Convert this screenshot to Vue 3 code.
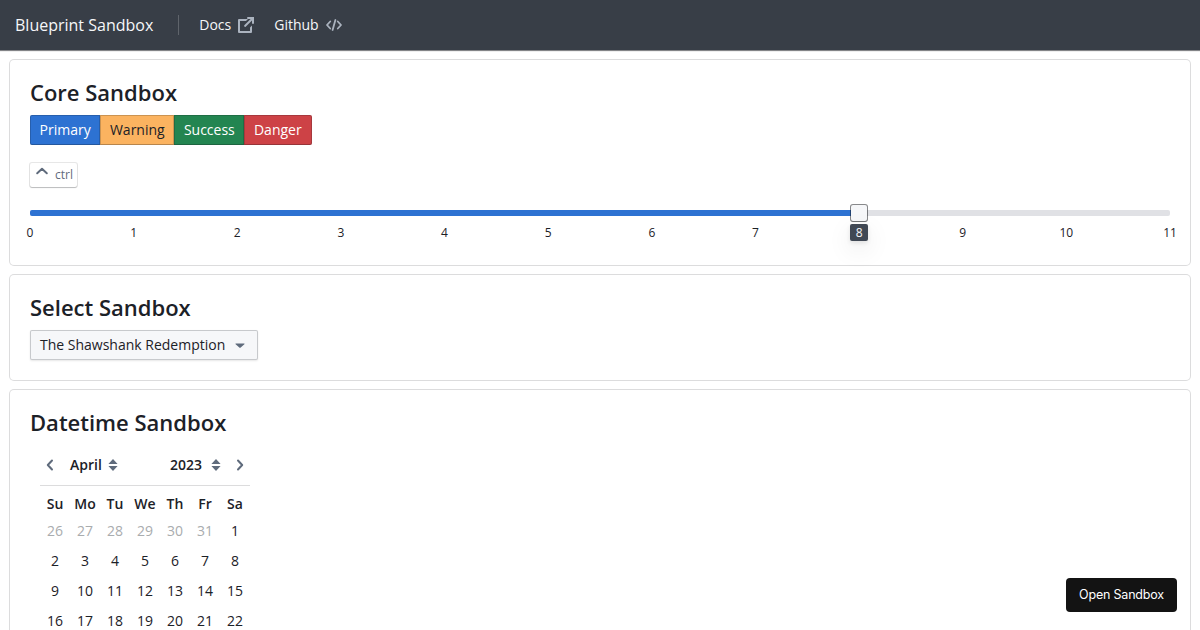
<template>
  <div class="page">
    <nav class="navbar">
      <span class="brand">Blueprint Sandbox</span>
      <span class="divider"></span>
      <a class="nav-link">
        Docs
        <svg class="share" width="16" height="16" viewBox="0 0 16 16">
          <path fill="currentColor" d="M10 0a1 1 0 0 0 0 2h2.6L6.3 8.3a1 1 0 0 0 1.4 1.4L14 3.4V6a1 1 0 1 0 2 0V0h-6zM1 2a1 1 0 0 0-1 1v12a1 1 0 0 0 1 1h12a1 1 0 0 0 1-1V8.5l-2 2V14H2V4h6l2-2H1z" />
        </svg>
      </a>
      <a class="nav-link">
        Github
        <svg class="code" width="16" height="16" viewBox="0 0 16 16">
          <path fill="none" stroke="currentColor" stroke-width="1.8" stroke-linecap="round" stroke-linejoin="round" d="M4.2 4.5 1 8l3.2 3.5M11.8 4.5 15 8l-3.2 3.5M9.4 3 6.6 13" />
        </svg>
      </a>
    </nav>

    <main class="content">
      <section class="card core">
        <h2>Core Sandbox</h2>
        <div class="btn-group">
          <button v-for="b of buttons" :key="b" :class="['btn', b.toLowerCase()]">{{ b }}</button>
        </div>
        <div class="key-row">
          <span class="key">
            <svg width="16" height="16" viewBox="0 0 16 16">
              <path fill="none" stroke="currentColor" stroke-width="2" stroke-linecap="round" stroke-linejoin="round" d="M3.2 9.2 8 4.8l4.8 4.4" />
            </svg>
            <span>ctrl</span>
          </span>
        </div>
        <div class="slider">
          <div class="track">
            <div class="fill" :style="{ width: (sliderValue / 11) * 100 + '%' }"></div>
          </div>
          <div class="axis">
            <span v-for="n in 12" :key="n" class="tick" :style="{ left: ((n - 1) / 11) * 100 + '%' }">{{ n - 1 }}</span>
          </div>
          <div class="handle" :style="{ left: (sliderValue / 11) * 100 + '%' }"></div>
          <div class="handle-label" :style="{ left: (sliderValue / 11) * 100 + '%' }">{{ sliderValue }}</div>
        </div>
      </section>

      <section class="card select">
        <h2>Select Sandbox</h2>
        <button class="select-btn">
          The Shawshank Redemption
          <svg width="16" height="16" viewBox="0 0 16 16">
            <path fill="currentColor" d="M3.9 6.4h8.2c.4 0 .6.5.3.8l-4 3.6c-.2.2-.6.2-.8 0l-4-3.6c-.3-.3-.1-.8.3-.8z" />
          </svg>
        </button>
      </section>

      <section class="card datetime">
        <h2>Datetime Sandbox</h2>
        <div class="calendar">
          <div class="cal-head">
            <svg class="chev" width="16" height="16" viewBox="0 0 16 16">
              <path fill="none" stroke="currentColor" stroke-width="2" stroke-linecap="round" stroke-linejoin="round" d="M10 3.5 5.8 8l4.2 4.5" />
            </svg>
            <span class="pick month">
              April
              <svg width="12" height="14" viewBox="0 0 12 14"><path fill="currentColor" d="M6 1 10.6 6H1.4zM6 13 1.4 8h9.2z" /></svg>
            </span>
            <span class="pick year">
              2023
              <svg width="12" height="14" viewBox="0 0 12 14"><path fill="currentColor" d="M6 1 10.6 6H1.4zM6 13 1.4 8h9.2z" /></svg>
            </span>
            <svg class="chev" width="16" height="16" viewBox="0 0 16 16">
              <path fill="none" stroke="currentColor" stroke-width="2" stroke-linecap="round" stroke-linejoin="round" d="M6 3.5 10.2 8 6 12.5" />
            </svg>
          </div>
          <div class="weekdays">
            <span v-for="d of weekdays" :key="d">{{ d }}</span>
          </div>
          <div class="days">
            <span v-for="d of days" :key="d.key" :class="{ muted: d.muted }">{{ d.label }}</span>
          </div>
        </div>
      </section>
    </main>

    <button class="open-sandbox">Open Sandbox</button>
  </div>
</template>

<script setup>
const buttons = ['Primary', 'Warning', 'Success', 'Danger'];
const sliderValue = 8;
const weekdays = ['Su', 'Mo', 'Tu', 'We', 'Th', 'Fr', 'Sa'];

// April 2023, with the tail of March in front
const days = [];
for (let d = 26; d <= 31; d++) days.push({ key: 'm' + d, label: d, muted: true });
for (let d = 1; d <= 29; d++) days.push({ key: 'a' + d, label: d, muted: false });
</script>

<style>
html, body {
  margin: 0;
  height: 100%;
  overflow: hidden;
  background: #fff;
}
</style>

<style scoped>
.page {
  position: relative;
  height: 630px;
  overflow: hidden;
  font-family: "Open Sans", "Liberation Sans", sans-serif;
  font-size: 14px;
  color: #1c2127;
  background: #fff;
}

.navbar {
  display: flex;
  align-items: center;
  height: 50px;
  padding: 0 15px;
  box-sizing: border-box;
  background: #383e47;
  color: #f6f7f9;
  box-shadow: 0 0 0 1px rgba(17, 20, 24, 0.2), 0 1px 1px rgba(17, 20, 24, 0.4);
}

.brand {
  font-size: 16px;
  line-height: 20px;
}

.divider {
  width: 1px;
  height: 20px;
  margin: 0 20px 0 25px;
  background: rgba(255, 255, 255, 0.2);
}

.nav-link {
  display: flex;
  align-items: center;
  gap: 7px;
  margin-right: 20px;
  line-height: 20px;
}

.nav-link svg {
  color: #abb3bf;
}

.content {
  display: flex;
  flex-direction: column;
  gap: 10px;
  padding: 10px;
}

.card {
  box-sizing: border-box;
  padding: 18px 20px 20px;
  border-radius: 4px;
  background: #fff;
  box-shadow: 0 0 0 1px rgba(17, 20, 24, 0.15);
}

.card.core {
  height: 205px;
}

.card.select {
  height: 105px;
}

h2 {
  margin: 0 0 9px;
  font-size: 22px;
  line-height: 28px;
  font-weight: 600;
}

.btn-group {
  display: flex;
}

.btn {
  height: 30px;
  padding: 0 9.6px 2px;
  border: none;
  font: inherit;
  cursor: pointer;
  box-shadow: inset 0 0 0 1px rgba(17, 20, 24, 0.2), inset 0 -1px 0 rgba(17, 20, 24, 0.1);
}

.btn:first-child {
  border-radius: 2px 0 0 2px;
}

.btn:last-child {
  padding-right: 10.4px;
  border-radius: 0 2px 2px 0;
}

.primary {
  background: #2d72d2;
  color: #fff;
}

.warning {
  background: #fbb360;
  color: #1c2127;
}

.success {
  background: #238551;
  color: #fff;
}

.danger {
  background: #cd4246;
  color: #fff;
}

.key-row {
  display: flex;
  margin-top: 18px;
}

.key {
  display: flex;
  align-items: center;
  height: 24px;
  box-sizing: border-box;
  padding: 0 4px 2px;
  gap: 5px;
  border-radius: 2px;
  background: #fff;
  color: #5f6b7c;
  font-size: 12px;
  box-shadow: 0 0 0 1px rgba(17, 20, 24, 0.1), 0 1px 1px rgba(17, 20, 24, 0.2);
}

.key svg {
  margin-top: -4px;
}

.slider {
  position: relative;
  height: 50px;
  margin-top: 23px;
}

.track {
  height: 6px;
  border-radius: 2px;
  background: #e0e1e5;
  overflow: hidden;
}

.fill {
  height: 100%;
  background: #2d72d2;
}

.axis {
  position: relative;
  height: 20px;
  margin-top: 9px;
}

.tick {
  position: absolute;
  top: 0;
  transform: translateX(-50%);
  font-size: 12px;
  line-height: 16px;
}

.handle {
  position: absolute;
  top: -5px;
  width: 16px;
  height: 16px;
  margin-left: -8px;
  box-sizing: border-box;
  border-radius: 2px;
  background: #f6f7f9;
  box-shadow: 0 0 0 1px rgba(17, 20, 24, 0.5), 0 1px 1px rgba(17, 20, 24, 0.2);
}

.handle-label {
  position: absolute;
  top: 14px;
  width: 18px;
  height: 17px;
  margin-left: -9px;
  border-radius: 2px;
  background: #404854;
  color: #f6f7f9;
  font-size: 12px;
  line-height: 17px;
  text-align: center;
  box-shadow: 0 2px 4px rgba(17, 20, 24, 0.1), 0 8px 24px rgba(17, 20, 24, 0.1);
}

.select-btn {
  display: inline-flex;
  align-items: center;
  gap: 7px;
  height: 30px;
  padding: 0 10px 2px;
  border: none;
  border-radius: 2px;
  background: #f6f7f9;
  color: #1c2127;
  font: inherit;
  cursor: pointer;
  box-shadow: inset 0 0 0 1px rgba(17, 20, 24, 0.2), 0 1px 2px rgba(17, 20, 24, 0.1);
}

.select-btn svg {
  margin-top: 2px;
  color: #5f6b7c;
}

.card.datetime {
  padding-bottom: 0;
}

.calendar {
  width: 210px;
  margin: 8px 0 0 10px;
}

.cal-head {
  display: flex;
  align-items: center;
  height: 39px;
  padding: 0 2px 1px;
  border-bottom: 1px solid #dcdcdd;
  color: #5f6b7c;
}

.chev {
  flex: none;
}

.pick {
  display: flex;
  align-items: center;
  color: #1c2127;
  font-weight: 600;
}

.pick svg {
  color: #5f6b7c;
}

.month {
  margin-left: 12px;
  gap: 5px;
}

.year {
  margin-left: auto;
  margin-right: 10.5px;
  gap: 7.5px;
}

.weekdays,
.days {
  display: grid;
  grid-template-columns: repeat(7, 30px);
  text-align: center;
}

.weekdays {
  height: 34px;
  align-items: center;
  font-weight: 600;
}

.days span {
  height: 30px;
  line-height: 22px;
}

.muted {
  color: #a9acae;
}

.open-sandbox {
  position: absolute;
  left: 1066px;
  top: 578px;
  width: 111px;
  height: 34px;
  padding: 0 0 2px;
  border: none;
  border-radius: 4px;
  background: #131313;
  color: #fff;
  font-family: Inter, "Liberation Sans", sans-serif;
  font-size: 12.5px;
  letter-spacing: -0.2px;
  cursor: pointer;
}
</style>
